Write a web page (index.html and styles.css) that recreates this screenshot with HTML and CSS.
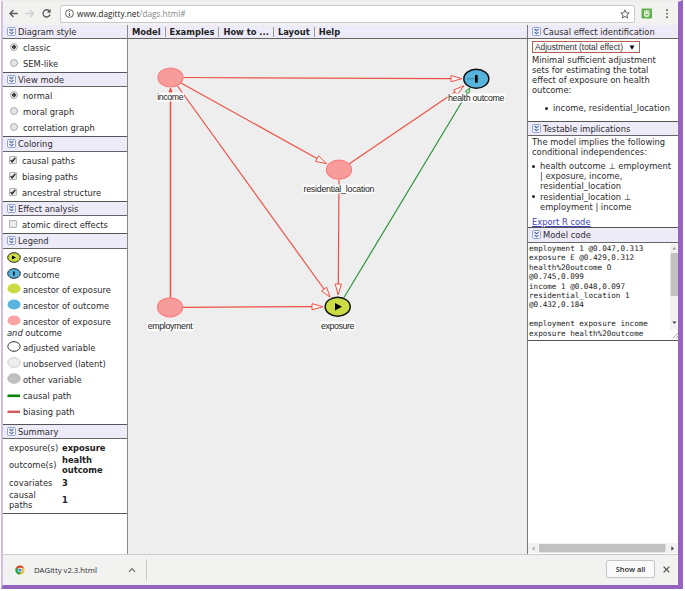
FILE: index.html
```html
<!DOCTYPE html>
<html>
<head>
    <meta charset="utf-8">
    <title>DAGitty v2.3</title>
    <link rel="stylesheet" href="styles.css">
</head>
<body>
<svg width="0" height="0" class="defs">
    <symbol id="fold" viewBox="0 0 9 9">
        <rect x="0.5" y="0.5" width="8" height="8" rx="1.2" fill="#f4f6fc" stroke="#8fa6cf"/>
        <path d="M2.5 2L4.5 3.8L6.5 2M2.5 4.8L4.5 6.8L6.5 4.8" fill="none" stroke="#4d64a8" stroke-width="1.1"/>
    </symbol>
</svg>
<div class="window">
    <div class="toolbar">
        <svg class="nav" width="60" height="23" viewBox="3 2 60 23" fill="none">
            <path d="M18.5 13.5H10.5M14 9.8L10.3 13.5L14 17.2" stroke="#5a5a5a" stroke-width="1.4"/>
            <path d="M27 13.5H35M31.5 9.8L35.2 13.5L31.5 17.2" stroke="#cfcfcf" stroke-width="1.4"/>
            <path d="M51.8 10.8A3.8 3.8 0 1 0 52.6 14.5" stroke="#5a5a5a" stroke-width="1.4"/>
            <path d="M53.2 8.8V12.8H49.2Z" fill="#5a5a5a"/>
        </svg>
        <div class="address">
            <svg width="9" height="9" viewBox="0 0 9 9"><circle cx="4.5" cy="4.5" r="3.9" fill="none" stroke="#555" stroke-width="0.9"/><path d="M4.5 2V3M4.5 4V7" stroke="#555" stroke-width="1"/></svg>
            <span class="url">www.dagitty.net<span class="path">/dags.html#</span></span>
            <svg class="star" width="10" height="10" viewBox="0 0 10 10"><path d="M5 0.9L6.2 3.7L9.2 4L6.9 6L7.6 9L5 7.4L2.4 9L3.1 6L0.8 4L3.8 3.7Z" fill="none" stroke="#555" stroke-width="0.9"/></svg>
        </div>
        <svg class="tools" width="37" height="23" viewBox="641 2 37 23">
            <rect x="641.5" y="8.5" width="10.5" height="10" rx="1" fill="#62b04a"/>
            <path d="M644 10.5H649.5V14.5Q649.5 17 646.7 17Q644 17 644 14.5Z" fill="#e6f5df"/>
            <path d="M644.8 12H646M647.6 12H648.8M645.3 14.7H648.3" stroke="#4d9a38" stroke-width="0.9"/>
            <circle cx="667" cy="10" r="0.95" fill="#555"/><circle cx="667" cy="13.6" r="0.95" fill="#555"/><circle cx="667" cy="17.2" r="0.95" fill="#555"/>
        </svg>
    </div>

    <div class="main">
        <div class="left">
            <div class="head"><svg><use href="#fold"/></svg>Diagram style</div>
            <div class="box style">
                <div class="opt"><i class="radio on"></i>classic</div>
                <div class="opt"><i class="radio"></i>SEM-like</div>
            </div>
            <div class="head"><svg><use href="#fold"/></svg>View mode</div>
            <div class="box view">
                <div class="opt"><i class="radio on"></i>normal</div>
                <div class="opt"><i class="radio"></i>moral graph</div>
                <div class="opt"><i class="radio"></i>correlation graph</div>
            </div>
            <div class="head tall"><svg><use href="#fold"/></svg>Coloring</div>
            <div class="box coloring">
                <div class="opt"><i class="check"><svg viewBox="0 0 8 8"><path d="M1.7 4L3.2 5.8L6.3 1.8"/></svg></i>causal paths</div>
                <div class="opt"><i class="check"><svg viewBox="0 0 8 8"><path d="M1.7 4L3.2 5.8L6.3 1.8"/></svg></i>biasing paths</div>
                <div class="opt"><i class="check"><svg viewBox="0 0 8 8"><path d="M1.7 4L3.2 5.8L6.3 1.8"/></svg></i>ancestral structure</div>
            </div>
            <div class="head"><svg><use href="#fold"/></svg>Effect analysis</div>
            <div class="box effect">
                <div class="opt"><i class="check"></i>atomic direct effects</div>
            </div>
            <div class="head tall"><svg><use href="#fold"/></svg>Legend</div>
            <div class="box legend">
                <div class="item"><svg viewBox="0 0 14 12"><ellipse cx="7" cy="5.5" rx="6.3" ry="4.8" fill="#cbdb45" stroke="#222"/><path d="M5 3.5L9 5.5L5 7.5Z"/></svg>exposure</div>
                <div class="item"><svg viewBox="0 0 14 12"><ellipse cx="7" cy="5.5" rx="6.3" ry="4.8" fill="#55b3dc" stroke="#222"/><path d="M6.2 3.5H7.6V7.5H6.2Z"/></svg>outcome</div>
                <div class="item"><svg viewBox="0 0 14 12"><ellipse cx="7" cy="5.5" rx="6.5" ry="5" fill="#cbdb45"/></svg>ancestor of exposure</div>
                <div class="item"><svg viewBox="0 0 14 12"><ellipse cx="7" cy="5.5" rx="6.5" ry="5" fill="#5bb4dc"/></svg>ancestor of outcome</div>
                <div class="item"><svg viewBox="0 0 14 12"><ellipse cx="7" cy="5.5" rx="6.5" ry="5" fill="#fba3a3"/></svg>ancestor of exposure</div>
                <div class="cont"><em>and</em> outcome</div>
                <div class="item"><svg viewBox="0 0 14 12"><ellipse cx="7" cy="5.5" rx="6.2" ry="4.8" fill="#fff" stroke="#333"/></svg>adjusted variable</div>
                <div class="item"><svg viewBox="0 0 14 12"><ellipse cx="7" cy="5.5" rx="6.2" ry="4.8" fill="#eee" stroke="#ccc"/></svg>unobserved (latent)</div>
                <div class="item"><svg viewBox="0 0 14 12"><ellipse cx="7" cy="5.5" rx="6.4" ry="5" fill="#bfbfbf" stroke="#b4b4b4" stroke-width="0.5"/></svg>other variable</div>
                <div class="item"><svg viewBox="0 0 14 12"><path d="M0.5 6.8H13" stroke="#0b820b" stroke-width="2.6"/></svg>causal path</div>
                <div class="item"><svg viewBox="0 0 14 12"><path d="M0.5 6.8H13" stroke="#d25a5a" stroke-width="2.4"/></svg>biasing path</div>
            </div>
            <div class="head"><svg><use href="#fold"/></svg>Summary</div>
            <div class="box summary">
                <span>exposure(s)</span><b>exposure</b>
                <span>outcome(s)</span><b>health<br>outcome</b>
                <span>covariates</span><b>3</b>
                <span>causal<br>paths</span><b>1</b>
            </div>
        </div>

        <div class="center">
            <div class="menu"><span>Model</span><span>Examples</span><span>How to ...</span><span>Layout</span><span>Help</span></div>
            <svg class="dag" width="399" height="515" viewBox="128 39 399 515">
                <!-- edges -->
                <g stroke="#ee5145" stroke-width="1.2" fill="none">
                    <path d="M170.5 298V92" stroke-width="1.5"/>
                    <path d="M183 77.5L451 78.6"/>
                    <path d="M181 83L317 158.5"/>
                    <path d="M177.5 86L324 289"/>
                    <path d="M183 307.3L312 306.7"/>
                    <path d="M339 179L338.3 284"/>
                    <path d="M349 164L455 92"/>
                </g>
                <path d="M344 297.5L469 90" stroke="#2d953a" stroke-width="1.2"/>
                <g stroke="#ee5145" stroke-width="1" fill="#fff5f3">
                    <path d="M451 75.5V81.7L462 78.7Z"/>
                    <path d="M318.6 155.8L315.6 161.4L326.5 163.7Z"/>
                    <path d="M326.6 287.3L321.5 291L330 297Z"/>
                    <path d="M312 303.7V309.8L323 306.7Z"/>
                    <path d="M335.2 284H341.4L338.2 295Z"/>
                    <path d="M453.5 90L457.5 94.5L464 85.7Z"/>
                    <path d="M169 92L170.5 88L172 92Z" fill="#ee5145"/>
                </g>
                <path d="M465.3 91.5L469.6 88L469 93.5Z" fill="#d5ead3" stroke="#2d953a"/>
                <!-- nodes -->
                <g fill="#f79b9b" stroke="#fa8080" stroke-width="1.2">
                    <ellipse cx="170.5" cy="77.5" rx="12.5" ry="9.5"/>
                    <ellipse cx="339" cy="169.7" rx="12.5" ry="9.5"/>
                    <ellipse cx="170" cy="307.3" rx="12.5" ry="9.5"/>
                </g>
                <ellipse cx="476.3" cy="78.8" rx="12.5" ry="9.5" fill="#55b3dc" stroke="#111" stroke-width="1.5"/>
                <path d="M467 78.8H479" stroke="#367b9c" stroke-width="0.8"/>
                <path d="M475 75H477.6V82.6H475Z"/>
                <ellipse cx="337.7" cy="306.7" rx="12.5" ry="9.5" fill="#cbdb45" stroke="#111" stroke-width="1.5"/>
                <path d="M335 303L342 306.7L335 310.4Z"/>
                <!-- labels -->
                <g fill="#fff" fill-opacity="0.9">
                    <rect x="157" y="92.5" width="27" height="9"/>
                    <rect x="303" y="184.5" width="72" height="9"/>
                    <rect x="447.5" y="93.5" width="57.5" height="9"/>
                    <rect x="147" y="322" width="46" height="9"/>
                    <rect x="320.5" y="321.5" width="34.5" height="9"/>
                </g>
                <g class="label">
                    <text x="157.3" y="99.7" textLength="26.3">income</text>
                    <text x="303.5" y="191.5" textLength="71">residential_location</text>
                    <text x="448" y="100.7" textLength="56.5">health outcome</text>
                    <text x="147.7" y="329.2" textLength="45">employment</text>
                    <text x="321" y="328.7" textLength="33.5">exposure</text>
                </g>
            </svg>
        </div>

        <div class="right">
            <div class="head"><svg><use href="#fold"/></svg>Causal effect identification</div>
            <div class="box cause">
                <div class="select">Adjustment (total effect)<svg width="6" height="5" viewBox="0 0 6 5"><path d="M0.5 0.5H5.5L3 4.8Z"/></svg></div>
                <p>Minimal sufficient adjustment<br>sets for estimating the total<br>effect of exposure on health<br>outcome:</p>
                <ul><li>income, residential_location</li></ul>
            </div>
            <div class="head"><svg><use href="#fold"/></svg>Testable implications</div>
            <div class="box test">
                <p>The model implies the following<br>conditional independences:</p>
                <ul>
                    <li>health outcome ⊥ employment<br>| exposure, income,<br>residential_location</li>
                    <li>residential_location ⊥<br>employment | income</li>
                </ul>
                <a href="#">Export R code</a>
            </div>
            <div class="head tall"><svg><use href="#fold"/></svg>Model code</div>
            <div class="code">
<pre>employment 1 @0.047,0.313
exposure E @0.429,0.312
health%20outcome O
@0.745,0.099
income 1 @0.048,0.097
residential_location 1
@0.432,0.184

employment exposure income
exposure health%20outcome</pre>
                <svg width="8" height="97" viewBox="0 0 8 97">
                    <path d="M0 0H8V97H0Z" fill="#f1f1f1"/>
                    <path d="M2.3 6.5L4.3 4L6.3 6.5Z" fill="#999"/>
                    <path d="M0.7 10H8V53H0.7Z" fill="#c1c1c1"/>
                    <path d="M2.3 78.5H6.5L4.4 81Z" fill="#444"/>
                    <path d="M0 87H8V97H0Z" fill="#fff"/>
                    <path d="M3 95L8 90M6 95L8 93" stroke="#999" stroke-width="0.8"/>
                </svg>
            </div>
            <div class="rest"></div>
            <svg class="hscroll" width="150" height="10" viewBox="528 543 150 10">
                <path d="M528 543H678V553H528Z" fill="#f1f1f1"/>
                <path d="M539 544H665.5V552.3H539Z" fill="#c1c1c1"/>
                <path d="M534.5 546.3V550.7L532 548.5Z" fill="#aaa"/>
                <path d="M671.3 546.3V550.7L674 548.5Z" fill="#444"/>
            </svg>
        </div>
    </div>

    <div class="download">
        <svg class="chrome" width="10" height="10" viewBox="0 0 10 10">
            <circle cx="5" cy="5" r="4.6" fill="#f4c430"/>
            <path d="M5 5L1 2.7A4.6 4.6 0 0 1 9 2.8H5Z" fill="#dc4437"/>
            <path d="M5 5L1 2.7A4.6 4.6 0 0 0 4.6 9.6L6.8 6Z" fill="#2f9e55"/>
            <circle cx="5" cy="5" r="2.2" fill="#fff"/><circle cx="5" cy="5" r="1.6" fill="#4385e8"/>
        </svg>
        <span class="file">DAGitty v2.3.html</span>
        <svg class="up" width="8" height="6" viewBox="0 0 8 6"><path d="M1 4.8L4 1.6L7 4.8" fill="none" stroke="#666" stroke-width="1.1"/></svg>
        <div class="sep"></div>
        <div class="showall">Show all</div>
        <svg class="close" width="7" height="7" viewBox="0 0 7 7"><path d="M0.6 0.6L6.4 6.4M6.4 0.6L0.6 6.4" stroke="#555" stroke-width="1.3"/></svg>
    </div>
</div>
</body>
</html>
```

FILE: styles.css
```css
* {
    box-sizing: border-box;
}
body {
    margin: 0;
    background: #fff;
    overflow: hidden;
    font-family: "DejaVu Sans", Verdana, sans-serif;
    font-size: 8.35px;
    color: #2e2a2e;
}
.defs {
    display: block;
}
.window {
    width: 682px;
    height: 589px;
    margin-left: 1px;
    border: solid #9564c0;
    border-width: 2px 5px 4px 2px;
    border-left-color: #d0bde4;
    border-top-color: #eeeeec;
    display: flex;
    flex-direction: column;
}
.toolbar {
    height: 23px;
    background: #f2f2f1;
    display: flex;
    align-items: center;
    justify-content: space-between;
}
.nav {
    width: 57px;
    flex: none;
}
.address {
    width: 575px;
    height: 18px;
    margin-right: 6px;
    padding: 0 4px;
    border: 1px solid #c9c9c9;
    border-radius: 2px;
    background: #fff;
    display: flex;
    align-items: center;
}
.url {
    font: 8.25px "Open Sans", sans-serif;
    margin-left: 3px;
    color: #222;
}
.path {
    color: #888;
}
.star {
    margin-left: auto;
}
.main {
    height: 529px;
    display: flex;
}
.left {
    width: 125px;
    background: #fff;
    border-right: 1px solid #888;
}
.head {
    height: 14px;
    padding-left: 4px;
    display: flex;
    align-items: center;
    background: #eeebf8;
    border-bottom: 1px solid #666;
    white-space: nowrap;
}
.head.tall {
    height: 15px;
}
.head svg {
    width: 9px;
    height: 9px;
    margin: 0 2px 1px 0;
}
.box {
    border-bottom: 1px solid #555;
    white-space: nowrap;
}
.style { height: 34px; }
.view { height: 50px; }
.coloring { height: 50px; }
.effect { height: 18px; }
.legend { height: 176px; padding: 2px 0 0 4px; }
.opt {
    height: 16.2px;
    padding: 1px 0 0 6px;
    display: flex;
    align-items: center;
}
.radio {
    width: 8px;
    height: 8px;
    border: 1px solid #aaa;
    border-radius: 50%;
    background: #e6e6e6;
    margin: 0 5px 1px 1px;
}
.radio.on {
    background: radial-gradient(circle, #444 0 1.6px, #e4e4e4 2.2px);
}
.check {
    width: 8px;
    height: 8px;
    border: 1px solid #b3b3b3;
    border-radius: 1px;
    background: #e9e9e9;
    margin: 0 5px 2px 0;
    display: flex;
}
.check svg {
    width: 8px;
    height: 8px;
    margin: -1px;
}
.check path {
    fill: none;
    stroke: #333;
    stroke-width: 1.5;
}
.item {
    height: 15.8px;
    display: flex;
    align-items: center;
}
.item svg {
    width: 14px;
    height: 12px;
    margin: 0 2px 2px 0;
}
.cont {
    height: 10.5px;
    line-height: 6px;
}
.summary {
    height: 75px;
    padding: 3px 0 0 6px;
    display: grid;
    grid-template-columns: 53px 1fr;
    grid-template-rows: 12px 22px 13px 22px;
    align-items: center;
    line-height: 10px;
}
.summary b {
    color: #222;
}
.center {
    width: 399px;
    background: #eee;
}
.menu {
    height: 14px;
    background: #eeebf8;
    border-bottom: 1px solid #666;
    display: flex;
    align-items: center;
    font-weight: bold;
    color: #222;
    padding-left: 4px;
}
.menu span + span {
    border-left: 1px solid #999;
    padding-left: 4px;
    margin-left: 4px;
}
.dag {
    display: block;
}
.label {
    font: 8.8px "Liberation Sans", Arial, sans-serif;
    fill: #222;
}
.right {
    width: 151px;
    background: #fff;
    border-left: 1px solid #777;
    display: flex;
    flex-direction: column;
}
p, ul {
    margin: 0;
    line-height: 10px;
}
ul {
    list-style: none;
}
li::before {
    content: "";
    display: inline-block;
    width: 3px;
    height: 3px;
    border-radius: 50%;
    background: #222;
    margin: 0 5px 1px -8px;
    vertical-align: middle;
}
.cause {
    height: 83px;
    padding: 2px 0 0 4px;
}
.select {
    width: 108px;
    height: 12px;
    border: 1px solid #b7604e;
    font: 8.35px "Liberation Sans", Arial, sans-serif;
    line-height: 10px;
    padding: 0 4px 0 2px;
    display: flex;
    align-items: center;
    justify-content: space-between;
    margin-bottom: 2px;
}
.cause ul {
    margin-top: 8px;
    padding-left: 21px;
}
.test {
    height: 92px;
    padding: 1px 0 0 4px;
}
.test ul {
    margin: 4px 0 5px;
    padding-left: 8px;
    line-height: 10.2px;
}
.test a {
    color: #4545bd;
}
.code {
    height: 98px;
    border-bottom: 1px solid #555;
    display: flex;
    justify-content: space-between;
    overflow: hidden;
}
pre {
    margin: 1px 0 0 1px;
    font: 7.6px "DejaVu Sans Mono", monospace;
    line-height: 9.4px;
    color: #222;
}
.rest {
    flex: 1;
}
.hscroll {
    margin-bottom: 1px;
}
.download {
    height: 31px;
    background: #f2f2f1;
    border-top: 1px solid #ccc;
    display: flex;
    align-items: center;
    padding: 0 8px 0 12px;
}
.file {
    font: 7.75px "Open Sans", sans-serif;
    margin-left: 9px;
    width: 94px;
}
.up {
    margin-right: 10px;
}
.sep {
    width: 1px;
    height: 22px;
    background: #ccc;
}
.showall {
    margin-left: auto;
    margin-top: -2px;
    width: 49px;
    height: 18px;
    border: 1px solid #c4c4c4;
    border-radius: 2px;
    background: #fafafa;
    font: 600 7.4px/16px "Open Sans", sans-serif;
    text-align: center;
}
.close {
    margin-left: 8px;
    margin-top: -2px;
}
```
